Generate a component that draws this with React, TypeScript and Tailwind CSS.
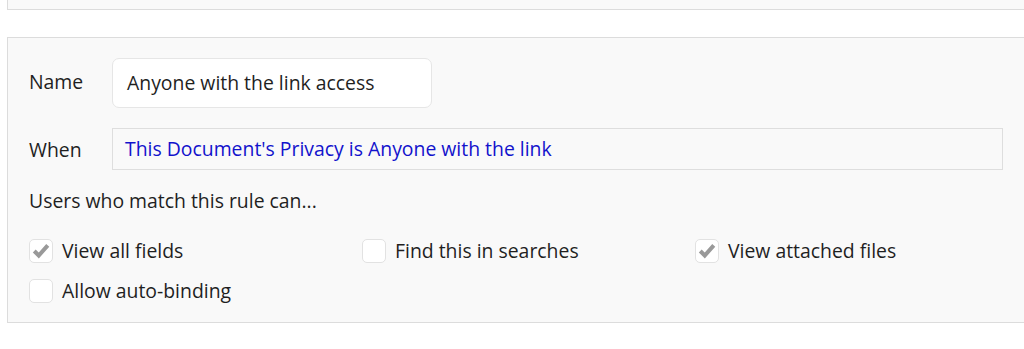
import React from 'react';

function Box({ checked, label }: { checked?: boolean; label: string }) {
  return (
    <label className="flex items-center h-[40px] gap-[9px]">
      <span className="w-[24px] h-[24px] rounded-[5px] bg-white border border-[#e2e2e2] flex items-center justify-center shrink-0">
        {checked && (
          <svg width="18" height="18" viewBox="0 0 16 16">
            <path d="M2 8 L6 12 L14 3" fill="none" stroke="#999999" strokeWidth="3.6" strokeLinejoin="miter" />
          </svg>
        )}
      </span>
      <span>{label}</span>
    </label>
  );
}

export default function App() {
  const perms = [
    { label: 'View all fields', checked: true },
    { label: 'Find this in searches', checked: false },
    { label: 'View attached files', checked: true },
    { label: 'Allow auto-binding', checked: false },
  ];

  return (
    <div className="bg-white h-[349px] overflow-hidden text-[19.4px] text-[#1f1f1f]" style={{ fontFamily: '"Open Sans", "Noto Sans", sans-serif' }}>
      <div className="ml-[7px] h-[10px] bg-[#f9f9f9] border-l border-b border-[#dcdcdc]" />

      <div className="ml-[7px] mt-[27px] h-[286px] bg-[#f9f9f9] border-l border-t border-b border-[#dcdcdc] pl-[21px] pt-[20px]">
        <div className="flex items-center">
          <span className="w-[83px] pb-[3px]">Name</span>
          <div className="w-[320px] h-[50px] bg-white border border-[#e6e6e6] rounded-[7px] flex items-center px-[14px]">
            Anyone with the link access
          </div>
        </div>

        <div className="flex items-center mt-[20px]">
          <span className="w-[83px] pt-[2px]">When</span>
          <div className="w-[891px] h-[42px] bg-[#f9f9f9] border border-[#dedede] flex items-center px-[12px] text-[#1212cc]">
            This Document's Privacy is Anyone with the link
          </div>
        </div>

        <div className="mt-[19px] leading-[24px]">Users who match this rule can...</div>

        <div className="grid grid-cols-[333px_333px_333px] mt-[18px]">
          {perms.map((p) => (
            <Box key={p.label} checked={p.checked} label={p.label} />
          ))}
        </div>
      </div>
    </div>
  );
}
